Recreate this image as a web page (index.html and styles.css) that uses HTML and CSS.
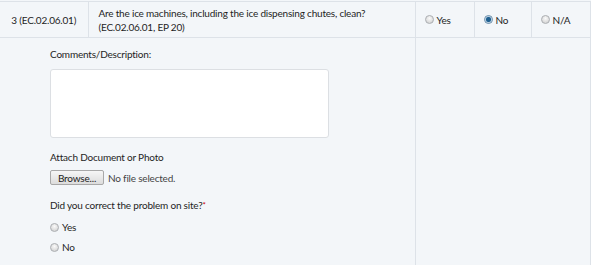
FILE: index.html
```html
<!DOCTYPE html>
<html>
<head>
<meta charset="utf-8">
<link rel="stylesheet" href="styles.css">
</head>
<body>
<table class="grid">
  <colgroup>
    <col class="w-num"><col class="w-q"><col class="w-o1"><col class="w-o2"><col class="w-o3">
  </colgroup>
  <tr class="qrow">
    <td class="c-num">3 (EC.02.06.01)</td>
    <td class="c-q">Are the ice machines, including the ice dispensing chutes, clean?<br>(EC.02.06.01, EP 20)</td>
    <td class="c-opt"><label class="opt"><span class="radio"></span>Yes</label></td>
    <td class="c-opt"><label class="opt"><span class="radio on"></span>No</label></td>
    <td class="c-opt"><label class="opt"><span class="radio"></span>N/A</label></td>
  </tr>
  <tr class="drow">
    <td class="detail" colspan="2">
      <div class="field-label">Comments/Description:</div>
      <div class="textarea"></div>
      <div class="field-label attach">Attach Document or Photo</div>
      <div class="file"><button class="browse">Browse...</button><span class="nofile">No file selected.</span></div>
      <div class="field-label corrected">Did you correct the problem on site?<span class="req">*</span></div>
      <label class="opt stack"><span class="radio"></span>Yes</label>
      <label class="opt stack"><span class="radio"></span>No</label>
    </td>
    <td class="blank" colspan="3"></td>
  </tr>
</table>
</body>
</html>
```
FILE: styles.css
```css
html, body {
  margin: 0;
  padding: 0;
  background: #f3f6f9;
}
body {
  font-family: Lato, "Open Sans", sans-serif;
  font-size: 10px;
  letter-spacing: -0.2px;
  color: #1e1e1e;
  padding-top: 1px;
}
.grid {
  border-collapse: collapse;
  width: 590px;
  table-layout: fixed;
}
.w-num { width: 88px; }
.w-q { width: 327px; }
.w-o1 { width: 59px; }
.w-o2 { width: 57px; }
.w-o3 { width: 59px; }
.grid td {
  border: 1px solid #dde2e8;
  vertical-align: middle;
  padding: 0;
}
.grid td:first-child { border-left: none; }
.c-num { text-align: center; }
.c-q { padding: 0 10px !important; line-height: 14px; }
.qrow { height: 36px; }
.opt {
  display: flex;
  align-items: center;
  gap: 3px;
}
.c-opt .opt { padding-left: 9px; }
.radio {
  width: 9px;
  height: 9px;
  border-radius: 50%;
  border: 1px solid #adb0b4;
  background: radial-gradient(circle at 50% 35%, #fafafa 0%, #dedede 60%, #c8c8c8 100%);
  box-sizing: border-box;
  display: inline-block;
  flex: none;
}
.radio.on {
  border-color: #6d90ac;
  background: radial-gradient(circle, #1f5f8e 0 2px, #4f86b3 2.5px, #dbe6ef 3.2px);
}
.detail {
  vertical-align: top !important;
  padding: 9px 0 0 50px !important;
  height: 226px;
  border-bottom: none !important;
}
.blank { border-bottom: none !important; border-right: 1px solid #dde2e8; }
.field-label { line-height: 14px; }
.textarea {
  margin-top: 8px;
  width: 279px;
  height: 69px;
  background: #fff;
  border: 1px solid #dcdfe3;
  border-radius: 3px;
  box-sizing: border-box;
}
.attach { margin-top: 12px; }
.file {
  margin-top: 6px;
  display: flex;
  align-items: center;
  gap: 4px;
}
.browse {
  font-family: inherit;
  font-size: 10px;
  letter-spacing: -0.2px;
  height: 15px;
  width: 54px;
  padding: 0;
  border: 1px solid #a8a8a8;
  border-radius: 2px;
  background: linear-gradient(#f6f6f6, #dcdcdc);
  color: #222;
}
.nofile { color: #444; }
.corrected { margin-top: 13px; }
.req { color: #c00; font-size: 8px; vertical-align: top; }
.stack { margin-top: 8px; line-height: 14px; }
.stack + .stack { margin-top: 6px; }
```
